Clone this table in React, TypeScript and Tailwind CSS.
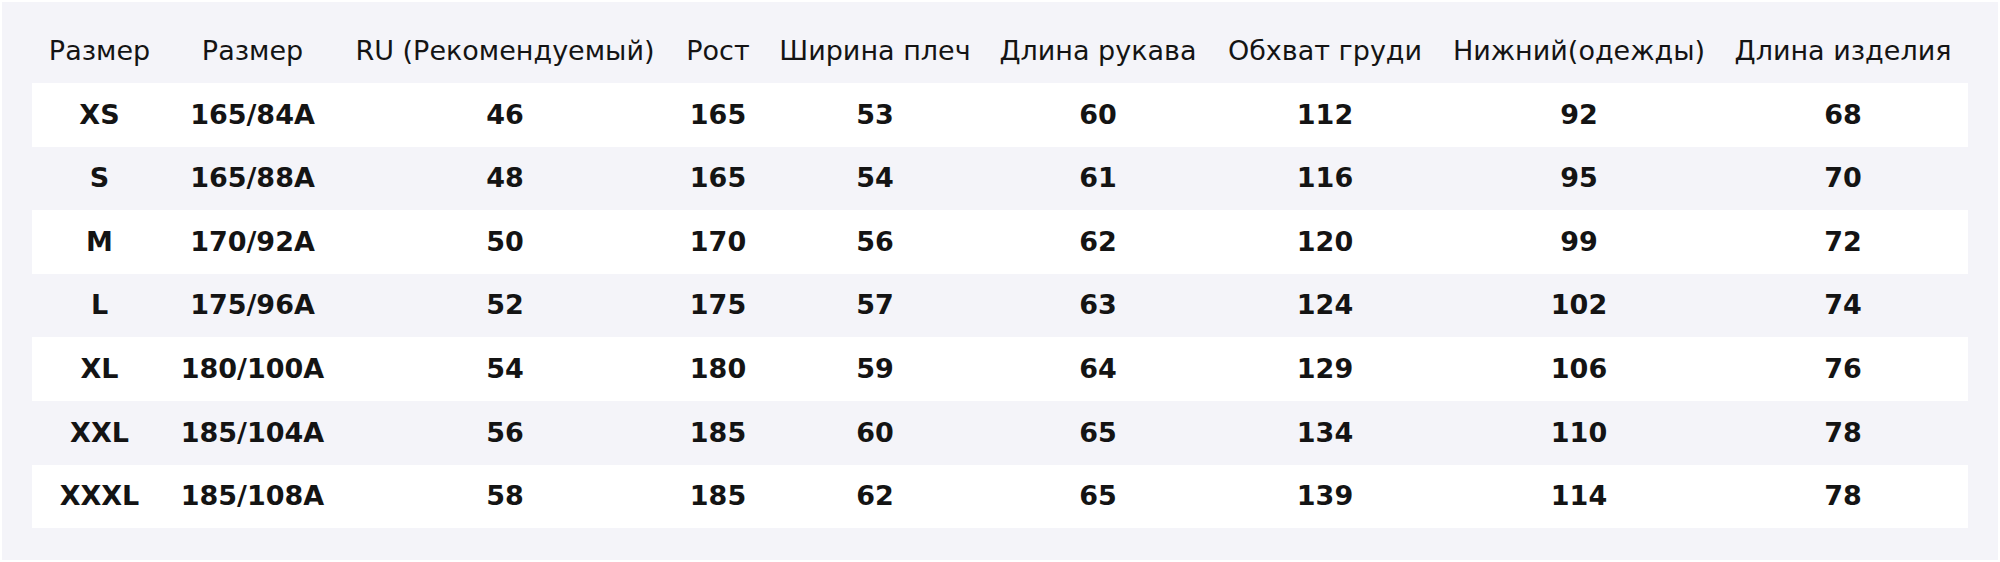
import React from "react";

const headers = [
  "Размер",
  "Размер",
  "RU (Рекомендуемый)",
  "Рост",
  "Ширина плеч",
  "Длина рукава",
  "Обхват груди",
  "Нижний(одежды)",
  "Длина изделия",
];

const rows = [
  ["XS", "165/84A", "46", "165", "53", "60", "112", "92", "68"],
  ["S", "165/88A", "48", "165", "54", "61", "116", "95", "70"],
  ["M", "170/92A", "50", "170", "56", "62", "120", "99", "72"],
  ["L", "175/96A", "52", "175", "57", "63", "124", "102", "74"],
  ["XL", "180/100A", "54", "180", "59", "64", "129", "106", "76"],
  ["XXL", "185/104A", "56", "185", "60", "65", "134", "110", "78"],
  ["XXXL", "185/108A", "58", "185", "62", "65", "139", "114", "78"],
];

const cols = "grid grid-cols-[135px_171px_334px_92px_222px_224px_230px_278px_250px]";

export default function App() {
  return (
    <div className="w-[2000px] h-[562px] bg-white p-[2px] font-['DejaVu_Sans',sans-serif] text-[#141414]">
      <div className="h-full bg-[#f4f4f9] px-[30px] pt-[17px]">
        <div className={`${cols} h-[64px] items-center text-[27px]`}>
          {headers.map((h, i) => (
            <div key={i} className="text-center whitespace-nowrap">
              {h}
            </div>
          ))}
        </div>
        {rows.map((r, idx) => (
          <div
            key={idx}
            className={`${cols} h-[63.6px] items-center text-[27px] font-bold ${
              idx % 2 === 0 ? "bg-white" : ""
            }`}
          >
            {r.map((c, i) => (
              <div key={i} className="text-center whitespace-nowrap">
                {c}
              </div>
            ))}
          </div>
        ))}
      </div>
    </div>
  );
}
